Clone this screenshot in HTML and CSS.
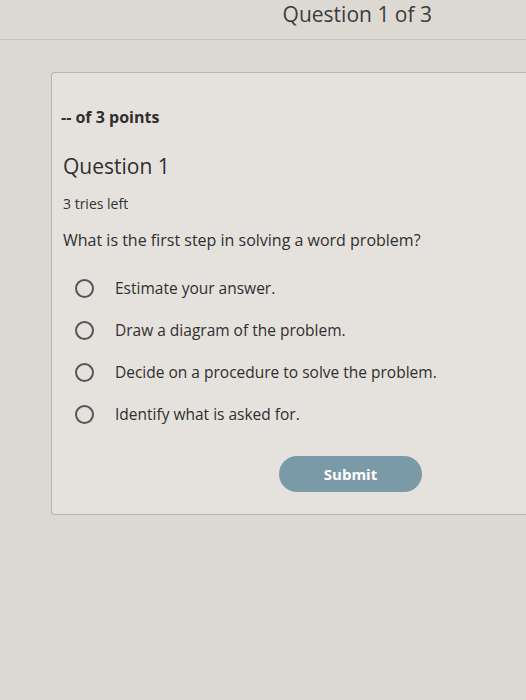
FILE: index.html
```html
<!DOCTYPE html>
<html lang="en">
<head>
<meta charset="utf-8">
<title>Question 1 of 3</title>
<link rel="stylesheet" href="styles.css">
</head>
<body>
<header class="topbar">
  <div class="counter">Question 1 of 3</div>
</header>
<main class="card">
  <div class="points">-- of 3 points</div>
  <h1 class="qtitle">Question 1</h1>
  <div class="tries">3 tries left</div>
  <p class="prompt">What is the first step in solving a word problem?</p>
  <ul class="options">
    <li class="option"><span class="radio"></span><span class="label">Estimate your answer.</span></li>
    <li class="option"><span class="radio"></span><span class="label">Draw a diagram of the problem.</span></li>
    <li class="option"><span class="radio"></span><span class="label">Decide on a procedure to solve the problem.</span></li>
    <li class="option"><span class="radio"></span><span class="label">Identify what is asked for.</span></li>
  </ul>
  <button class="submit" type="button">Submit</button>
</main>
</body>
</html>
```
FILE: styles.css
```css
html, body {
  margin: 0;
  padding: 0;
}
body {
  background: #dcd9d3;
  font-family: "Open Sans", "Noto Sans", sans-serif;
  color: #303030;
  width: 526px;
  height: 700px;
  overflow: hidden;
}
.topbar {
  height: 40px;
  border-bottom: 1px solid #c6c3bd;
  box-sizing: border-box;
  text-align: right;
  padding-right: 94px;
}
.counter {
  font-size: 21px;
  line-height: normal;
  color: #3c3c3c;
}
.card {
  display: block;
  margin: 32px 0 0 51px;
  width: 475px;
  box-sizing: border-box;
  background: #e5e2dd;
  border: 1px solid #b8b5af;
  border-right: none;
  border-radius: 4px 0 0 4px;
  padding: 33px 0 22px 9px;
}
.points {
  font-size: 16px;
  font-weight: 700;
  line-height: 22px;
  color: #2f2f2f;
}
.qtitle {
  margin: 24px 0 0 2px;
  font-size: 21px;
  font-weight: 400;
  line-height: 28px;
  color: #2f2f2f;
}
.tries {
  margin: 15px 0 0 2px;
  font-size: 14px;
  line-height: 18px;
  color: #333;
}
.prompt {
  margin: 17px 0 0 2px;
  font-size: 16px;
  line-height: 20px;
  color: #2f2f2f;
}
.options {
  list-style: none;
  margin: 17px 0 0 0;
  padding: 0 0 0 14px;
}
.option {
  height: 42px;
  display: flex;
  align-items: center;
  gap: 21px;
}
.radio {
  width: 15px;
  height: 15px;
  border: 2px solid #555;
  border-radius: 50%;
  flex: none;
}
.label {
  font-size: 15.5px;
  line-height: 22px;
  color: #2f2f2f;
}
.submit {
  display: block;
  margin: 21px 0 0 218px;
  width: 143px;
  height: 36px;
  border: none;
  border-radius: 18px;
  background: #7b9aa8;
  color: #fff;
  font-family: "Open Sans", "Noto Sans", sans-serif;
  font-size: 15px;
  font-weight: 700;
  padding: 0;
}
```
